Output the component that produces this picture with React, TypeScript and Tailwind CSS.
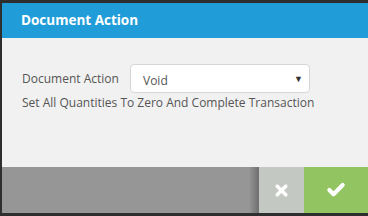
import { Check, X } from 'lucide-react'

export default function App() {
  return (
    <div className="w-[368px] h-[216px] bg-[#2e2e2e] pt-[3px] pl-[2px] pb-[3px] overflow-hidden" style={{ fontFamily: '"Open Sans", "Noto Sans", sans-serif' }}>
      <div className="flex flex-col h-full bg-[#f1f1f1]">
        <div className="h-[35px] bg-[#209dd8] flex items-center pl-[19px]">
          <span className="text-white text-[13.5px] font-bold">Document Action</span>
        </div>
        <div className="flex-1 pl-[20px] pt-[26px]">
          <div className="flex items-center">
            <span className="text-[12px] text-[#555] w-[108px]">Document Action</span>
            <div className="w-[180px] h-[29px] bg-white border border-[#d6d6d6] rounded-[4px] flex items-center justify-between pl-[12px] pr-[6px]">
              <span className="text-[12px] text-[#555] pt-[4px]">Void</span>
              <span className="text-[9px] text-[#333]">▼</span>
            </div>
          </div>
          <div className="text-[12px] text-[#555] mt-[1px]">Set All Quantities To Zero And Complete Transaction</div>
        </div>
        <div className="h-[46px] bg-[#969696] flex justify-end">
          <div className="w-[10px] bg-gradient-to-r from-[#969696] to-[#6e6e6e]" />
          <button className="w-[45px] bg-[#c4c8c2] flex items-center justify-center">
            <X className="w-[17px] h-[17px] text-white" strokeWidth={5} />
          </button>
          <button className="w-[64px] bg-[#92c462] flex items-center justify-center">
            <Check className="w-[20px] h-[20px] text-white" strokeWidth={5} />
          </button>
        </div>
      </div>
    </div>
  )
}
